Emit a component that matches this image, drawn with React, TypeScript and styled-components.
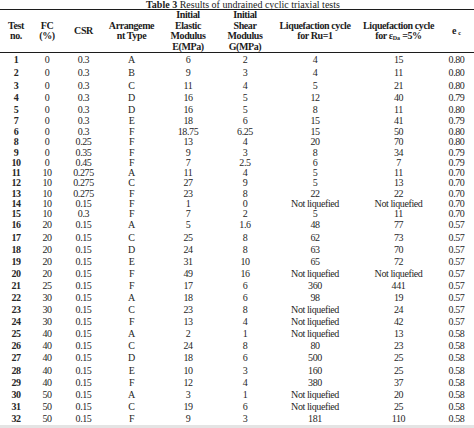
import React from 'react'
import styled, { createGlobalStyle } from 'styled-components'

const GlobalStyle = createGlobalStyle`
    html, body {
        margin: 0;
        padding: 0;
        background: #ffffff;
    }
`

const Page = styled.div`
    width: 474px;
    height: 428px;
    display: flex;
    flex-direction: column;
    overflow: hidden;
    font-family: 'Liberation Serif', 'Times New Roman', serif;
    color: #1c1c1c;
    background: #ffffff;
`

const Caption = styled.div`
    height: 9px;
    font-size: 10px;
    line-height: 9px;
    text-align: center;
    padding-left: 12px;
    white-space: nowrap;

    b {
        font-weight: 700;
    }
`

const Table = styled.table`
    width: 474px;
    border-collapse: collapse;
    table-layout: fixed;
    font-size: 10px;
    letter-spacing: -0.4px;
`

const HeadRow = styled.tr`
    height: 42px;
    border-top: 1.5px solid #1c1c1c;
    border-bottom: 1.5px solid #1c1c1c;
`

const HeadCell = styled.th`
    padding: 0;
    font-weight: 700;
    line-height: 10.6px;
    text-align: center;
    vertical-align: middle;

    sub {
        font-size: 6px;
        vertical-align: -1px;
        line-height: 0;
        letter-spacing: 0;
    }
`

const Row = styled.tr<{ $h: number }>`
    height: ${(p) => p.$h}px;
`

const Cell = styled.td<{ $bold?: boolean }>`
    padding: 0;
    line-height: 10px;
    text-align: center;
    vertical-align: middle;
    white-space: nowrap;
    color: #262626;
    font-weight: ${(p) => (p.$bold ? 700 : 400)};
`

const BottomEdge = styled.div`
    margin-top: auto;
    height: 3px;
    background: #e4e4e4;
`

const widths = [32, 30, 43, 53, 60, 54, 86, 81, 35]

const NL = 'Not liquefied'

type Test = [string, string, string, string, string, string, string, string, string, number]

const tests: Test[] = [
    ['1', '0', '0.3', 'A', '6', '2', '4', '15', '0.80', 14],
    ['2', '0', '0.3', 'B', '9', '3', '4', '11', '0.80', 13],
    ['3', '0', '0.3', 'C', '11', '4', '5', '21', '0.80', 12.5],
    ['4', '0', '0.3', 'D', '16', '5', '12', '40', '0.79', 11.5],
    ['5', '0', '0.3', 'D', '16', '5', '8', '11', '0.80', 11.5],
    ['7', '0', '0.3', 'E', '18', '6', '15', '41', '0.79', 11.5],
    ['6', '0', '0.3', 'F', '18.75', '6.25', '15', '50', '0.80', 10.5],
    ['8', '0', '0.25', 'F', '13', '4', '20', '70', '0.80', 10],
    ['9', '0', '0.35', 'F', '9', '3', '8', '34', '0.79', 10.5],
    ['10', '0', '0.45', 'F', '7', '2.5', '6', '7', '0.79', 10.5],
    ['11', '10', '0.275', 'A', '11', '4', '5', '11', '0.70', 10],
    ['12', '10', '0.275', 'C', '27', '9', '5', '13', '0.70', 10],
    ['13', '10', '0.275', 'F', '23', '8', '22', '22', '0.70', 11],
    ['14', '10', '0.15', 'F', '1', '0', NL, NL, '0.70', 10],
    ['15', '10', '0.3', 'F', '7', '2', '5', '11', '0.70', 10],
    ['16', '20', '0.15', 'A', '5', '1.6', '48', '77', '0.57', 12.1],
    ['17', '20', '0.15', 'C', '25', '8', '62', '73', '0.57', 12.1],
    ['18', '20', '0.15', 'D', '24', '8', '63', '70', '0.57', 12.1],
    ['19', '20', '0.15', 'E', '31', '10', '65', '72', '0.57', 12.1],
    ['20', '20', '0.15', 'F', '49', '16', NL, NL, '0.57', 12.1],
    ['21', '25', '0.15', 'F', '17', '6', '360', '441', '0.57', 12.1],
    ['22', '30', '0.15', 'A', '18', '6', '98', '19', '0.57', 12.1],
    ['23', '30', '0.15', 'C', '23', '8', NL, '24', '0.57', 12.1],
    ['24', '30', '0.15', 'F', '13', '4', NL, '42', '0.57', 12.1],
    ['25', '40', '0.15', 'A', '2', '1', NL, '13', '0.58', 12.1],
    ['26', '40', '0.15', 'C', '24', '8', '80', '23', '0.58', 12.1],
    ['27', '40', '0.15', 'D', '18', '6', '500', '25', '0.58', 12.1],
    ['28', '40', '0.15', 'E', '10', '3', '160', '25', '0.58', 12.1],
    ['29', '40', '0.15', 'F', '12', '4', '380', '37', '0.58', 12.1],
    ['30', '50', '0.15', 'A', '3', '1', NL, '20', '0.58', 12.1],
    ['31', '50', '0.15', 'C', '19', '6', NL, '25', '0.58', 12.1],
    ['32', '50', '0.15', 'F', '9', '3', '181', '110', '0.58', 12.1],
]

export default function App() {
    return (
        <>
            <GlobalStyle />
            <Page>
                <Caption>
                    <b>Table 3</b> Results of undrained cyclic triaxial tests
                </Caption>
                <Table>
                    <colgroup>
                        {widths.map((w, i) => (
                            <col key={i} style={{ width: w }} />
                        ))}
                    </colgroup>
                    <thead>
                        <HeadRow>
                            <HeadCell>
                                Test
                                <br />
                                no.
                            </HeadCell>
                            <HeadCell>
                                FC
                                <br />
                                (%)
                            </HeadCell>
                            <HeadCell>CSR</HeadCell>
                            <HeadCell>
                                Arrangeme
                                <br />
                                nt Type
                            </HeadCell>
                            <HeadCell>
                                Initial
                                <br />
                                Elastic
                                <br />
                                Modulus
                                <br />
                                E(MPa)
                            </HeadCell>
                            <HeadCell>
                                Initial
                                <br />
                                Shear
                                <br />
                                Modulus
                                <br />
                                G(MPa)
                            </HeadCell>
                            <HeadCell>
                                Liquefaction cycle
                                <br />
                                for Ru=1
                            </HeadCell>
                            <HeadCell>
                                Liquefaction cycle
                                <br />
                                for ε<sub>Da</sub> =5%
                            </HeadCell>
                            <HeadCell>
                                e <sub>c</sub>
                            </HeadCell>
                        </HeadRow>
                    </thead>
                    <tbody>
                        {tests.map((t) => (
                            <Row key={t[0]} $h={t[9]}>
                                <Cell $bold>{t[0]}</Cell>
                                {t.slice(1, 9).map((v, i) => (
                                    <Cell key={i}>{v}</Cell>
                                ))}
                            </Row>
                        ))}
                    </tbody>
                </Table>
                <BottomEdge />
            </Page>
        </>
    )
}
